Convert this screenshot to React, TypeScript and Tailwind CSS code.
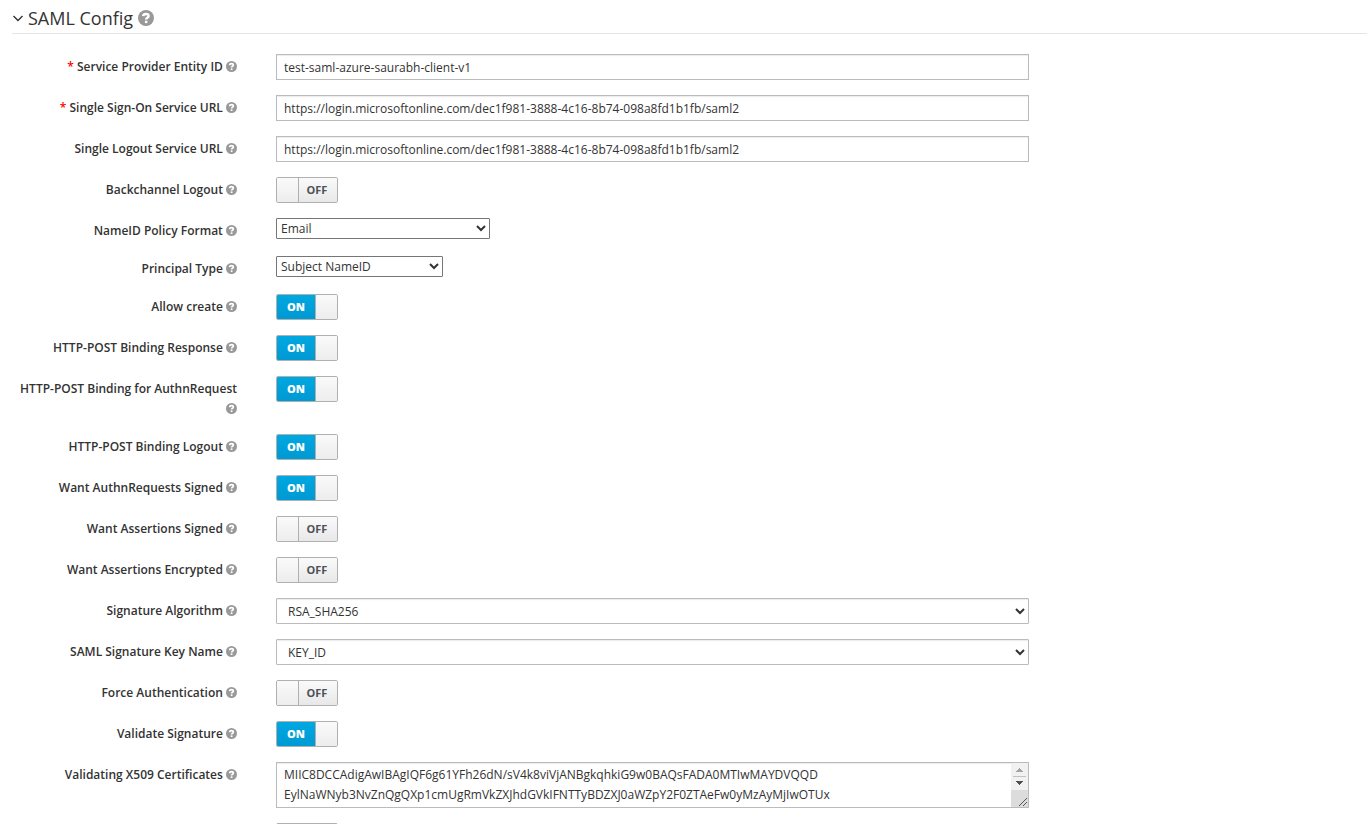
import React, { useState } from 'react';

type Field =
  | { kind: 'text'; id: string; label: string; value: string; required?: boolean }
  | { kind: 'switch'; id: string; label: string; on: boolean }
  | { kind: 'select'; id: string; label: string; options: string[]; size: 'md' | 'sm' | 'full' }
  | { kind: 'area'; id: string; label: string; value: string };

const SAML_URL = 'https://login.microsoftonline.com/dec1f981-3888-4c16-8b74-098a8fd1b1fb/saml2';

const CERTIFICATE = `MIIC8DCCAdigAwIBAgIQF6g61YFh26dN/sV4k8viVjANBgkqhkiG9w0BAQsFADA0MTIwMAYDVQQD
EylNaWNyb3NvZnQgQXp1cmUgRmVkZXJhdGVkIFNTTyBDZXJ0aWZpY2F0ZTAeFw0yMzAyMjIwOTUx`;

const FIELDS: Field[] = [
  { kind: 'text', id: 'entityId', label: 'Service Provider Entity ID', value: 'test-saml-azure-saurabh-client-v1', required: true },
  { kind: 'text', id: 'ssoUrl', label: 'Single Sign-On Service URL', value: SAML_URL, required: true },
  { kind: 'text', id: 'logoutUrl', label: 'Single Logout Service URL', value: SAML_URL },
  { kind: 'switch', id: 'backchannel', label: 'Backchannel Logout', on: false },
  { kind: 'select', id: 'nameIdFormat', label: 'NameID Policy Format', options: ['Email'], size: 'md' },
  { kind: 'select', id: 'principalType', label: 'Principal Type', options: ['Subject NameID'], size: 'sm' },
  { kind: 'switch', id: 'allowCreate', label: 'Allow create', on: true },
  { kind: 'switch', id: 'postResponse', label: 'HTTP-POST Binding Response', on: true },
  { kind: 'switch', id: 'postAuthn', label: 'HTTP-POST Binding for AuthnRequest', on: true },
  { kind: 'switch', id: 'postLogout', label: 'HTTP-POST Binding Logout', on: true },
  { kind: 'switch', id: 'authnSigned', label: 'Want AuthnRequests Signed', on: true },
  { kind: 'switch', id: 'assertSigned', label: 'Want Assertions Signed', on: false },
  { kind: 'switch', id: 'assertEncrypted', label: 'Want Assertions Encrypted', on: false },
  { kind: 'select', id: 'sigAlgorithm', label: 'Signature Algorithm', options: ['RSA_SHA256'], size: 'full' },
  { kind: 'select', id: 'sigKeyName', label: 'SAML Signature Key Name', options: ['KEY_ID'], size: 'full' },
  { kind: 'switch', id: 'forceAuth', label: 'Force Authentication', on: false },
  { kind: 'switch', id: 'validateSig', label: 'Validate Signature', on: true },
  { kind: 'area', id: 'certs', label: 'Validating X509 Certificates', value: CERTIFICATE },
  { kind: 'switch', id: 'signMetadata', label: 'Sign Service Provider Metadata', on: false },
];

const SELECT_STYLES = {
  md: 'h-[21px] w-[214px] border-[#767676]',
  sm: 'h-[21px] w-[167px] border-[#767676]',
  full: 'h-[26px] w-full border-[#bbb] pl-[7px] shadow-[inset_0_1px_1px_rgba(0,0,0,0.08)]',
};

const HelpIcon: React.FC<{ className: string }> = ({ className }) => (
  <svg viewBox="0 0 16 16" className={className} aria-hidden="true">
    <circle cx="8" cy="8" r="8" fill="#999" />
    <path d="M5.2 6.2C5.3 4.7 6.4 3.9 8 3.9S10.6 4.8 10.6 6C10.6 7.7 8.1 7.7 8.1 9.5" fill="none" stroke="#fff" strokeWidth="2.5" />
    <rect x="6.9" y="10.7" width="2.5" height="2.4" fill="#fff" />
  </svg>
);

const Switch: React.FC<{ id: string; initial: boolean }> = ({ id, initial }) => {
  const [on, setOn] = useState(initial);
  return (
    <label className="relative flex h-[26px] w-[62px] cursor-pointer overflow-hidden rounded-[2px] border border-[#b0b0b0] text-[11px] leading-6">
      <input id={id} type="checkbox" checked={on} onChange={() => setOn(!on)} className="sr-only" />
      {on ? (
        <>
          <span className="w-[38px] bg-linear-to-b from-[#00a8e1] to-[#0099d3] text-center font-extrabold text-white">ON</span>
          <span className="flex-1 border-l border-[#b0b0b0] bg-linear-to-b from-[#fafafa] to-[#ededed]" />
        </>
      ) : (
        <>
          <span className="w-[22px] border-r border-[#b0b0b0] bg-linear-to-b from-[#fafafa] to-[#ededed]" />
          <span className="flex-1 bg-linear-to-b from-[#fafafa] to-[#e8e8e8] pr-0.5 text-center font-bold text-[#4d5258]">OFF</span>
        </>
      )}
    </label>
  );
};

const CertificateArea: React.FC<{ id: string; value: string }> = ({ id, value }) => (
  <div className="flex h-[46px] border border-[#bbb] shadow-[inset_0_1px_1px_rgba(0,0,0,0.08)]">
    <textarea
      id={id}
      defaultValue={value}
      rows={2}
      wrap="off"
      className="min-w-0 flex-1 resize-none overflow-hidden px-[7px] pt-0.5 leading-5 outline-none"
    />
    <svg viewBox="0 0 17 44" className="h-[44px] w-[17px] shrink-0" shapeRendering="crispEdges" aria-hidden="true">
      <rect width="17" height="27" fill="#f1f1f1" />
      <rect y="27" width="17" height="17" fill="#dcdcdc" />
      <path d="M5 9h7L8.5 5z" fill="#a3a3a3" />
      <path d="M2 13.5h13" stroke="#c1c1c1" />
      <path d="M5 18h7L8.5 22z" fill="#505050" />
      <path d="M8 43l8-8M12 43l4-4" stroke="#555" fill="none" />
    </svg>
  </div>
);

const Control: React.FC<{ field: Field }> = ({ field }) => {
  switch (field.kind) {
    case 'text':
      return (
        <input
          id={field.id}
          type="text"
          defaultValue={field.value}
          className="block h-[26px] w-full border border-[#bbb] px-[7px] shadow-[inset_0_1px_1px_rgba(0,0,0,0.08)] outline-none"
        />
      );
    case 'switch':
      return <Switch id={field.id} initial={field.on} />;
    case 'select':
      return (
        <select id={field.id} className={`block rounded-[1px] border bg-white ${SELECT_STYLES[field.size]}`}>
          {field.options.map((o) => (
            <option key={o}>{o}</option>
          ))}
        </select>
      );
    case 'area':
      return <CertificateArea id={field.id} value={field.value} />;
  }
};

const App: React.FC = () => {
  return (
    <main className="h-screen overflow-x-hidden overflow-y-auto bg-white font-['Open_Sans',sans-serif] text-xs text-[#333] [scrollbar-width:none]">
      <h2 className="ml-3 flex h-[34px] items-center border-b border-[#e5e5e5] pt-[3px] text-lg leading-6 text-[#333]">
        <svg viewBox="0 0 12 12" className="mr-1 size-3" aria-hidden="true">
          <path d="M1.5 4L6 8.5L10.5 4" fill="none" stroke="#333" strokeWidth="1.4" />
        </svg>
        SAML Config
        <HelpIcon className="ml-[5px] size-4" />
      </h2>

      <form className="mt-5 flex flex-col gap-[15px]">
        {FIELDS.map((f) => (
          <div key={f.id} className="grid grid-cols-[276px_minmax(0,753fr)_minmax(0,338fr)]">
            <label htmlFor={f.id} className="pt-[3px] pr-[39px] pl-3 text-right leading-5 font-semibold">
              {f.kind === 'text' && f.required && <span className="text-[#f00]">* </span>}
              {f.label} <HelpIcon className="inline size-[11px] align-[-1px]" />
            </label>
            <Control field={f} />
          </div>
        ))}
      </form>
    </main>
  );
};

export default App;
